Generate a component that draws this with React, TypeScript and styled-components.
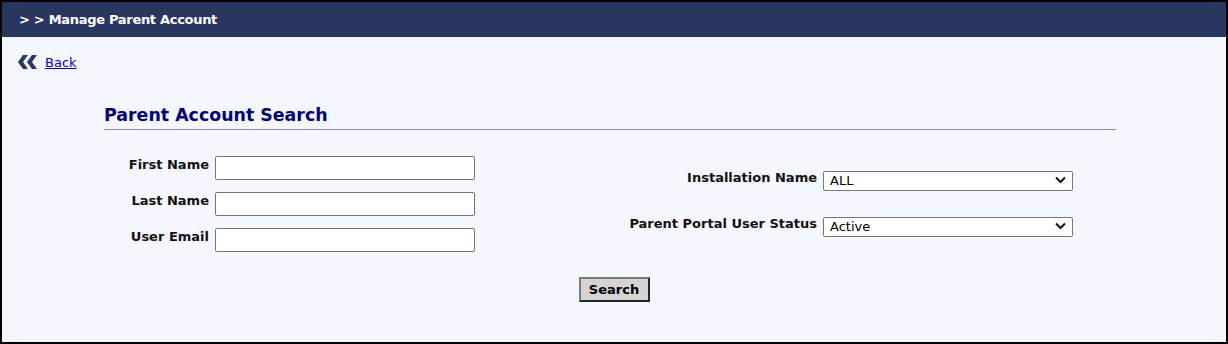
import React from 'react';
import styled, { createGlobalStyle } from 'styled-components';

const GlobalStyle = createGlobalStyle`
  html, body {
    margin: 0;
    padding: 0;
    background: #ffffff;
  }
  * {
    box-sizing: border-box;
  }
`;

const Frame = styled.div`
  width: 1228px;
  height: 344px;
  border: 2px solid #000;
  background: #f4f8fe;
  font-family: "DejaVu Sans", Verdana, sans-serif;
  display: flex;
  flex-direction: column;
`;

const Header = styled.header`
  height: 35px;
  background: #29365f;
  color: #fff;
  font-weight: bold;
  font-size: 13px;
  display: flex;
  align-items: center;
  padding-left: 17px;
  letter-spacing: -0.3px;
`;

const BackRow = styled.div`
  display: flex;
  align-items: center;
  gap: 6px;
  padding: 16px 0 0 15px;
  height: 34px;
`;

const BackLink = styled.a`
  color: #0000ee;
  font-size: 13px;
  text-decoration: underline;
  cursor: pointer;
`;

const Section = styled.section`
  margin: 0 110px 0 102px;
  padding-top: 34px;
`;

const Title = styled.h2`
  margin: 0;
  color: #000080;
  font-size: 17.4px;
  font-weight: bold;
  padding-bottom: 4px;
  border-bottom: 1px solid #8a8ac6;
`;

const FormRow = styled.div`
  display: flex;
  align-items: center;
  padding-top: 26px;
`;

const FieldGroup = styled.div<{ $labelWidth: number; $rowGap: number }>`
  display: grid;
  grid-template-columns: ${p => p.$labelWidth}px auto;
  column-gap: 6px;
  row-gap: ${p => p.$rowGap}px;
  align-items: center;
`;

const Label = styled.label<{ $lift: number }>`
  text-align: right;
  font-weight: bold;
  font-size: 13px;
  color: #111;
  padding-bottom: ${p => p.$lift}px;
`;

const TextInput = styled.input`
  width: 260px;
  height: 24px;
  border: 1px solid #767676;
  border-radius: 2px;
  background: #fff;
  padding: 0 4px;
  font-family: inherit;
  font-size: 13px;
`;

const SelectWrap = styled.div`
  position: relative;
  width: 250px;
  height: 20px;
`;

const Select = styled.select`
  appearance: none;
  width: 250px;
  height: 20px;
  border: 1px solid #767676;
  border-radius: 2px;
  background: #fff;
  font-family: "DejaVu Sans", Verdana, sans-serif;
  font-size: 13px;
  color: #000;
  padding: 0 0 0 6px;
`;

const Chevron = styled.svg`
  position: absolute;
  right: 7px;
  top: 6px;
  pointer-events: none;
`;

const RightGroup = styled.div`
  margin-left: 48px;
  padding-bottom: 2px;
`;

const ButtonRow = styled.div`
  display: flex;
  justify-content: center;
  padding-top: 25px;
`;

const SearchButton = styled.button`
  width: 71px;
  height: 25px;
  background: #d4d4d4;
  border: 2px solid;
  border-color: #7a7a7a #262626 #262626 #7a7a7a;
  font-family: "DejaVu Sans", Verdana, sans-serif;
  font-weight: bold;
  font-size: 13px;
  color: #000;
  padding: 0;
`;

const BackIcon = () => (
  <svg width="22" height="14" viewBox="0 0 22 14">
    <path d="M6 0 L11 0 L6 7 L11 14 L6 14 L1 7 Z" fill="#29365f" />
    <path d="M15 0 L20 0 L15 7 L20 14 L15 14 L10 7 Z" fill="#29365f" />
  </svg>
);

const DropDown = ({ value, options }: { value: string; options: string[] }) => (
  <SelectWrap>
    <Select defaultValue={value}>
      {options.map(o => (
        <option key={o}>{o}</option>
      ))}
    </Select>
    <Chevron width="11" height="8" viewBox="0 0 11 8">
      <path d="M1 1.5 L5.5 6 L10 1.5" fill="none" stroke="#111" strokeWidth="2" />
    </Chevron>
  </SelectWrap>
);

export default function App() {
  return (
    <>
      <GlobalStyle />
      <Frame>
        <Header>&gt; &gt; Manage Parent Account</Header>
        <BackRow>
          <BackIcon />
          <BackLink>Back</BackLink>
        </BackRow>
        <Section>
          <Title>Parent Account Search</Title>
          <FormRow>
            <FieldGroup $labelWidth={105} $rowGap={12}>
              <Label $lift={8}>First Name</Label>
              <TextInput />
              <Label $lift={8}>Last Name</Label>
              <TextInput />
              <Label $lift={8}>User Email</Label>
              <TextInput />
            </FieldGroup>
            <RightGroup>
              <FieldGroup $labelWidth={294} $rowGap={26}>
                <Label $lift={5}>Installation Name</Label>
                <DropDown value="ALL" options={['ALL']} />
                <Label $lift={5}>Parent Portal User Status</Label>
                <DropDown value="Active" options={['Active', 'Inactive']} />
              </FieldGroup>
            </RightGroup>
          </FormRow>
        </Section>
        <ButtonRow>
          <SearchButton>Search</SearchButton>
        </ButtonRow>
      </Frame>
    </>
  );
}
